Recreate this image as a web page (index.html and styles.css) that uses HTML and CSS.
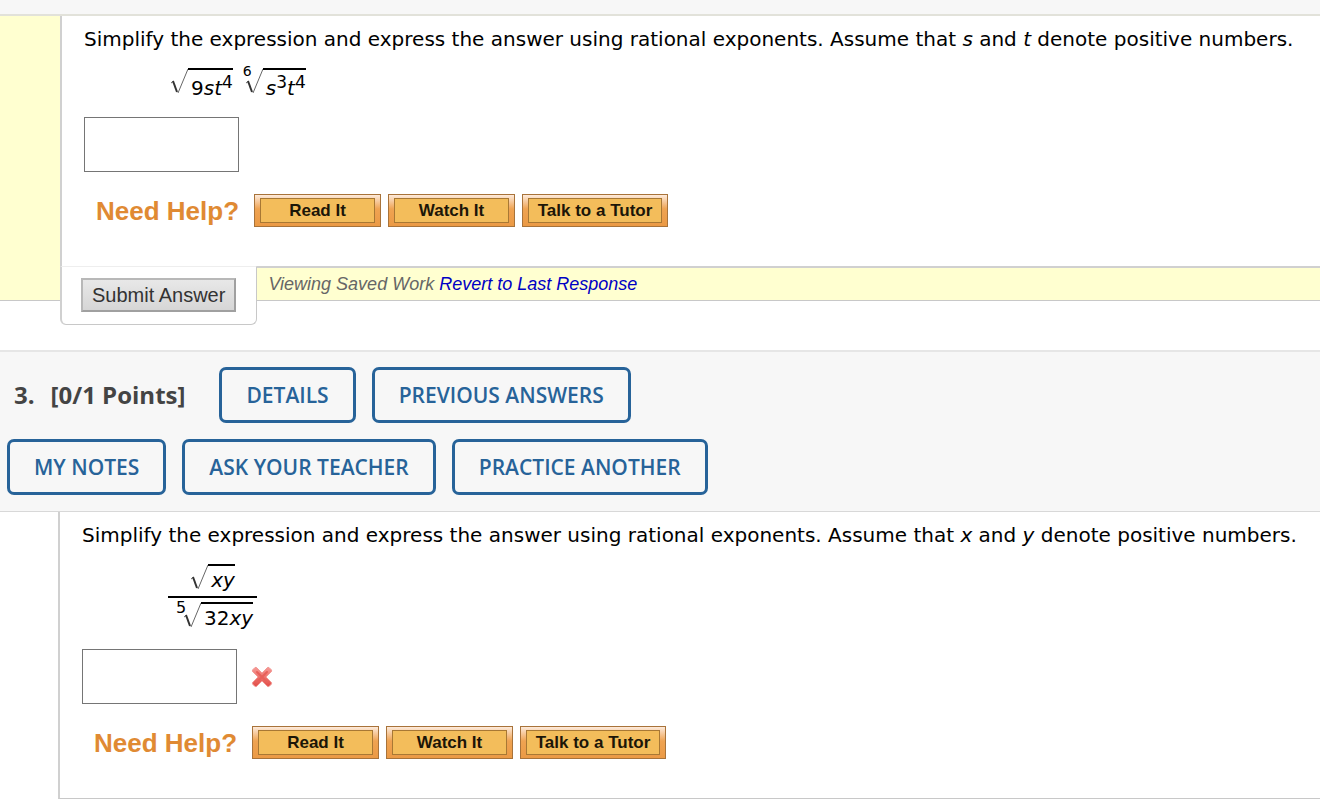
FILE: index.html
```html
<!DOCTYPE html>
<html lang="en">
<head>
<meta charset="utf-8">
<title>Homework: Rational Exponents</title>
<link rel="stylesheet" href="styles.css">
</head>
<body>
<div class="topbar"></div>

<section class="question saved">
  <div class="row">
    <div class="gutter"></div>
    <div class="content">
      <p class="prompt">Simplify the expression and express the answer using rational exponents. Assume that <i>s</i> and <i>t</i> denote positive numbers.</p>
      <div class="math">
        <span class="root">
          <svg class="radical" viewBox="0 0 18 26" aria-hidden="true"><path d="M1 15l3-2" class="thin"/><path d="M3 13l4 11" class="thick"/><path d="M8 25L18 1" class="thin"/></svg>
          <span class="radicand">9<i>st</i><sup>4</sup></span>
        </span>
        <span class="root indexed">
          <span class="index">6</span>
          <svg class="radical" viewBox="0 0 18 26" aria-hidden="true"><path d="M1 15l3-2" class="thin"/><path d="M3 13l4 11" class="thick"/><path d="M8 25L18 1" class="thin"/></svg>
          <span class="radicand"><i>s</i><sup>3</sup><i>t</i><sup>4</sup></span>
        </span>
      </div>
      <div class="answer"><input class="answer-box" type="text" aria-label="Answer to question 2"></div>
      <div class="help">
        <span class="help-label">Need Help?</span>
        <button class="help-btn" type="button"><span>Read It</span></button>
        <button class="help-btn" type="button"><span>Watch It</span></button>
        <button class="help-btn wide" type="button"><span>Talk to a Tutor</span></button>
      </div>
    </div>
  </div>
  <div class="footer">
    <div class="footer-gutter"></div>
    <div class="submit-tab"><button class="submit" type="button">Submit Answer</button></div>
    <div class="status">Viewing Saved Work <a href="#revert">Revert to Last Response</a></div>
  </div>
</section>

<header class="question-header">
  <div class="header-row">
    <h2 class="title"><span>3.</span><span class="points">[0/1 Points]</span></h2>
    <button class="action" type="button">DETAILS</button>
    <button class="action" type="button">PREVIOUS ANSWERS</button>
  </div>
  <div class="header-row">
    <button class="action" type="button">MY NOTES</button>
    <button class="action" type="button">ASK YOUR TEACHER</button>
    <button class="action" type="button">PRACTICE ANOTHER</button>
  </div>
</header>

<section class="question graded">
  <div class="row">
    <div class="gutter"></div>
    <div class="content">
      <p class="prompt">Simplify the expression and express the answer using rational exponents. Assume that <i>x</i> and <i>y</i> denote positive numbers.</p>
      <div class="math">
        <span class="fraction">
          <span class="numerator">
            <span class="root">
              <svg class="radical" viewBox="0 0 18 26" aria-hidden="true"><path d="M1 15l3-2" class="thin"/><path d="M3 13l4 11" class="thick"/><path d="M8 25L18 1" class="thin"/></svg>
              <span class="radicand"><i>xy</i></span>
            </span>
          </span>
          <span class="denominator">
            <span class="root indexed">
              <span class="index">5</span>
              <svg class="radical" viewBox="0 0 18 26" aria-hidden="true"><path d="M1 15l3-2" class="thin"/><path d="M3 13l4 11" class="thick"/><path d="M8 25L18 1" class="thin"/></svg>
              <span class="radicand">32<i>xy</i></span>
            </span>
          </span>
        </span>
      </div>
      <div class="answer">
        <input class="answer-box" type="text" aria-label="Answer to question 3">
        <svg class="wrong" viewBox="0 0 22 22" role="img" aria-label="Incorrect">
          <defs><linearGradient id="red" x1="0" y1="0" x2="0" y2="1"><stop offset="0" stop-color="#f79a96"/><stop offset="1" stop-color="#e24c46"/></linearGradient></defs>
          <path d="M4 1.500Q5 1 6 2L11 7L16 2Q17 1 18 1.500L20.500 4Q21 5 20 6L15 11L20 16Q21 17 20.500 18L18 20.500Q17 21 16 20L11 15L6 20Q5 21 4 20.500L1.500 18Q1 17 2 16L7 11L2 6Q1 5 1.500 4Z" fill="url(#red)" stroke="#f29a96" stroke-width="1" stroke-linejoin="round"/>
          <path d="M6 6L16 16M16 6L6 16" fill="none" stroke="#e8605a" stroke-width="2" stroke-linecap="round"/>
        </svg>
      </div>
      <div class="help">
        <span class="help-label">Need Help?</span>
        <button class="help-btn" type="button"><span>Read It</span></button>
        <button class="help-btn" type="button"><span>Watch It</span></button>
        <button class="help-btn wide" type="button"><span>Talk to a Tutor</span></button>
      </div>
    </div>
  </div>
</section>
</body>
</html>
```
FILE: styles.css
```css
* { box-sizing: border-box; }

body {
  margin: 0;
  background: #fff;
  color: #000;
  font-family: Verdana, "DejaVu Sans", sans-serif;
  font-size: 20px;
  overflow-x: hidden;
}

button, input { margin: 0; font: inherit; }

.topbar {
  height: 16px;
  background: #f7f7f7;
  border-bottom: 2px solid #e2e2da;
}

.row { display: flex; }

.gutter { flex: none; width: 60px; }

.saved .gutter { background: #ffffd0; }

.graded .gutter { width: 58px; }

.content {
  flex: 1;
  min-width: 0;
  padding: 7px 0 39px 22px;
  border-left: 2px solid #d0d0d0;
}

.graded .content { border-bottom: 1px solid #c8c8c8; }

.prompt {
  margin: 0;
  line-height: 32px;
  white-space: nowrap;
}

/* Formulas */
.math {
  display: flex;
  gap: 12px;
  padding: 13px 0 0 86px;
  line-height: 28px;
}

.root {
  position: relative;
  display: inline-flex;
  align-items: flex-start;
}

.radical {
  width: 18px;
  height: 26px;
  fill: none;
}

.thin { stroke: #666; stroke-width: 1; }
.thick { stroke: #333; stroke-width: 2; }

.radicand {
  padding: 4px 0 0 3px;
  border-top: 2px solid #000;
  white-space: nowrap;
}

.radicand sup {
  font-size: 17px;
  line-height: 0;
  vertical-align: 7px;
}

.index {
  position: absolute;
  top: -5px;
  left: -2px;
  font-size: 14px;
  line-height: 16px;
}

.fraction {
  display: inline-flex;
  flex-direction: column;
  align-items: center;
}

.numerator, .denominator { display: flex; justify-content: center; }

.numerator { height: 32px; }

.numerator .radicand, .denominator .radicand { padding-top: 0; }

.denominator {
  padding: 4px 4px 0 15px;
  border-top: 2px solid #000;
}

.denominator .index {
  top: -2px;
  left: -7px;
  font-size: 16px;
}

/* Answers */
.answer {
  display: flex;
  align-items: center;
  gap: 14px;
  padding-top: 15px;
}

.graded .answer { padding-top: 17px; }

.answer-box {
  width: 155px;
  height: 55px;
  padding: 0 8px;
  border: 1px solid #757575;
  border-radius: 0;
  background: #fff;
}

.wrong { width: 22px; height: 22px; }

.help {
  display: flex;
  align-items: center;
  gap: 7px;
  padding: 22px 0 0 12px;
}

.help-label {
  margin-right: 8px;
  color: #e08a33;
  font: bold 26px/32px "Liberation Sans", Arial, sans-serif;
}

.help-btn {
  width: 127px;
  height: 33px;
  padding: 3px 5px;
  border: 1px solid #a8733a;
  background: linear-gradient(#fdeadb, #efa352 45%, #eb9a45);
  color: #1c1608;
  font: bold 17px/22px "Liberation Sans", Arial, sans-serif;
}

.help-btn span {
  display: block;
  padding-top: 1px;
  border: 1px solid #a87834;
  background: #f3bd5b;
}

.help-btn.wide { width: 146px; }

/* Submission strip */
.footer {
  display: flex;
  align-items: flex-start;
  font-family: "Liberation Sans", Arial, sans-serif;
}

.footer-gutter {
  width: 60px;
  height: 35px;
  border-bottom: 1px solid #c8c8c8;
  background: #ffffd0;
}

.submit-tab {
  padding: 11px 20px 12px 19px;
  border: 1px solid #c8c8c8;
  border-left: 2px solid #d0d0d0;
  border-top: 1px solid #eee;
  border-radius: 0 0 6px 6px;
}

.submit {
  height: 34px;
  padding: 0 9px;
  border: 2px solid #b8b8b8;
  border-right-color: #a0a0a0;
  border-bottom-color: #a0a0a0;
  background: linear-gradient(#e8e8e8, #d6d6d6);
  color: #333;
  font-size: 20px;
  line-height: 28px;
}

.status {
  flex: 1;
  padding: 0 11px;
  border-top: 2px solid #d0d0d0;
  border-bottom: 1px solid #c8c8c8;
  background: #ffffd0;
  color: #666;
  font-size: 18px;
  font-style: italic;
  line-height: 32px;
}

.status a { color: #0000c4; text-decoration: none; }

/* Question header */
.question-header {
  display: grid;
  gap: 16px;
  margin-top: 25px;
  padding: 15px 7px 16px;
  border-top: 2px solid #e6e6e6;
  border-bottom: 1px solid #d8d8d8;
  background: #f7f7f7;
  font-family: "Open Sans", sans-serif;
}

.header-row { display: flex; align-items: center; gap: 16px; }

.title {
  display: flex;
  gap: 16px;
  margin: 0;
  padding: 0 18px 0 7px;
  color: #444;
  font-size: 24px;
  line-height: 32px;
}

.action {
  height: 56px;
  padding: 0 24px;
  border: 3px solid #276399;
  border-radius: 7px;
  background: transparent;
  color: #276399;
  font-size: 21px;
  font-weight: 600;
  line-height: 48px;
}
```
